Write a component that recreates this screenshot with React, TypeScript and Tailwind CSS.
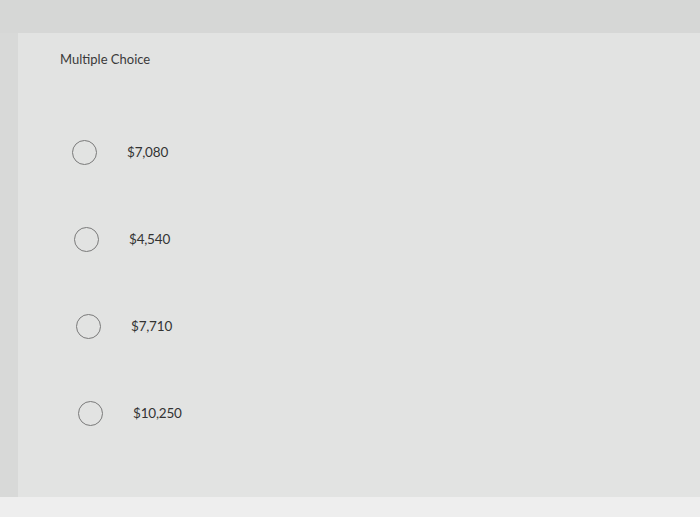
import React from 'react';

const options = [
  { label: '$7,080', shift: 'ml-0' },
  { label: '$4,540', shift: 'ml-[2px]' },
  { label: '$7,710', shift: 'ml-[4px]' },
  { label: '$10,250', shift: 'ml-[6px]' },
];

export default function App() {
  return (
    <div className="w-[700px] h-[517px] bg-[#d8d9d8] flex flex-col overflow-hidden font-['Lato',sans-serif]">
      <div className="h-[33px] bg-[#d6d7d6]" />
      <div className="flex-1 ml-[18px] bg-[#e2e3e2] pl-[42px] pt-[18px] flex flex-col">
        <h2 className="text-[13px] text-[#3a3a3a] leading-[16px]">Multiple Choice</h2>
        <div className="mt-[73px] flex flex-col gap-[63px]">
          {options.map((o) => (
            <label key={o.label} className={`flex items-center h-[24px] ${o.shift}`}>
              <span className="ml-[12px] w-[25px] h-[25px] rounded-full border-[1.5px] border-[#7a7a7a]" />
              <span className="ml-[30px] text-[13.5px] text-[#333] tracking-[-0.2px]">{o.label}</span>
            </label>
          ))}
        </div>
      </div>
      <div className="h-[20px] bg-[#eeeeee]" />
    </div>
  );
}
